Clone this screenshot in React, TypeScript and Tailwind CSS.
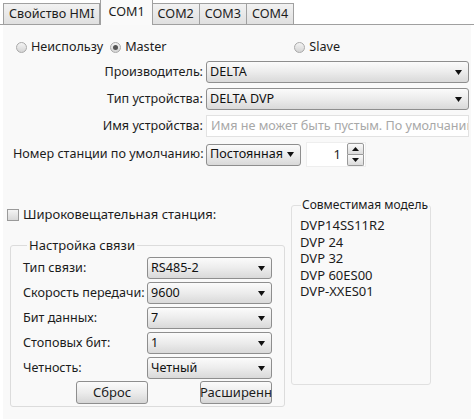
import React from "react";

const tabs = ["Свойство HMI", "COM1", "COM2", "COM3", "COM4"];
const models = ["DVP14SS11R2", "DVP 24", "DVP 32", "DVP 60ES00", "DVP-XXES01"];

function Arrow() {
  return (
    <svg width="7" height="5" viewBox="0 0 7 5" className="shrink-0">
      <path d="M0 0 H7 L3.5 5 Z" fill="#111" />
    </svg>
  );
}

function Select({ value, className = "" }: { value: string; className?: string }) {
  return (
    <div
      className={`flex items-center justify-between h-[22px] pl-[3px] pr-[6px] rounded-[3px] border border-[#8e8e8e] bg-gradient-to-b from-[#fbfbfb] via-[#ececec] to-[#d9d9d9] text-[#111] ${className}`}
    >
      <span className="truncate">{value}</span>
      <Arrow />
    </div>
  );
}

function Radio({ checked, label }: { checked?: boolean; label: string }) {
  return (
    <label className="flex items-center gap-[4px]">
      <span className="w-[11px] h-[11px] rounded-full border border-[#a9a9a9] bg-gradient-to-b from-[#f4f4f4] to-[#d4d4d4] flex items-center justify-center">
        {checked && <span className="w-[5px] h-[5px] rounded-full bg-[#555]" />}
      </span>
      <span>{label}</span>
    </label>
  );
}

function Btn({ label }: { label: string }) {
  return (
    <div className="w-[72px] h-[23px] flex items-center justify-center rounded-[3px] border border-[#8e8e8e] bg-gradient-to-b from-[#fbfbfb] via-[#ececec] to-[#d6d6d6] text-[13px]">
      {label}
    </div>
  );
}

export default function App() {
  return (
    <div
      className="w-[474px] h-[419px] bg-white text-[12.6px] text-[#1c1c1c] overflow-hidden"
      style={{ fontFamily: '"Noto Sans", "Liberation Sans", sans-serif' }}
    >
      {/* вкладки */}
      <div className="flex items-end h-[25px] pl-[3px] border-b border-[#a0a0a0]">
        {tabs.map((t) => {
          const active = t === "COM1";
          return (
            <div
              key={t}
              className={
                active
                  ? "relative -mb-px h-[26px] px-[7px] flex items-center border border-b-0 border-[#a0a0a0] bg-[#fafafa] text-[12.6px]"
                  : "h-[21px] px-[5px] flex items-center border border-l-0 first:border-l border-b-0 border-[#a0a0a0] bg-gradient-to-b from-[#f2f2f2] to-[#e0e0e0] text-[12.6px]"
              }
            >
              {t}
            </div>
          );
        })}
      </div>

      <div className="mx-[3px] h-[394px] bg-[#f9f9f9] pt-[14px]">
        {/* режим */}
        <div className="flex items-center h-[16px] pl-[13px]">
          <Radio label="Неиспользу" />
          <div className="ml-[7px]">
            <Radio checked label="Master" />
          </div>
          <div className="ml-auto mr-[131px]">
            <Radio label="Slave" />
          </div>
        </div>

        {/* параметры устройства */}
        <div className="grid grid-cols-[190px_263px] gap-x-[3px] gap-y-[5px] mt-[6px] pl-[10px] items-center">
          <span className="text-right">Производитель:</span>
          <Select value="DELTA" />
          <span className="text-right">Тип устройства:</span>
          <Select value="DELTA DVP" />
          <span className="text-right">Имя устройства:</span>
          <div className="h-[22px] flex items-center px-[4px] border border-[#e2e2e2] bg-white text-[#a8a8a8] whitespace-nowrap overflow-hidden">
            Имя не может быть пустым. По умолчанию
          </div>
          <span className="text-right whitespace-nowrap">Номер станции по умолчанию:</span>
          <div className="flex items-center gap-[5px]">
            <Select value="Постоянная" className="w-[95px]" />
            <div className="flex items-center h-[25px] w-[60px] bg-white border border-[#eeeeee]">
              <span className="flex-1 text-right pr-[6px] text-[13px]">1</span>
              <div className="flex flex-col w-[17px] h-[23px] mr-[1px]">
                <div className="flex-1 flex items-center justify-center border border-[#9a9a9a] rounded-t-[2px] bg-gradient-to-b from-[#fafafa] to-[#dcdcdc]">
                  <svg width="7" height="4" viewBox="0 0 7 4">
                    <path d="M0 4 H7 L3.5 0 Z" fill="#111" />
                  </svg>
                </div>
                <div className="flex-1 flex items-center justify-center border border-t-0 border-[#9a9a9a] rounded-b-[2px] bg-gradient-to-b from-[#fafafa] to-[#dcdcdc]">
                  <svg width="7" height="4" viewBox="0 0 7 4">
                    <path d="M0 0 H7 L3.5 4 Z" fill="#111" />
                  </svg>
                </div>
              </div>
            </div>
          </div>
        </div>

        {/* нижняя часть */}
        <div className="flex mt-[30px]">
          <div className="w-[280px] pl-[4px]">
            <label className="flex items-center gap-[4px] h-[16px] mt-[10px]">
              <span className="w-[12px] h-[12px] border border-[#9a9a9a] bg-gradient-to-b from-[#f4f4f4] to-[#d8d8d8]" />
              <span className="text-[13px]">Широковещательная станция:</span>
            </label>
            <fieldset className="mt-[14px] ml-[3px] w-[273px] h-[170px] border border-[#dcdcdc] rounded-[3px] px-[12px]">
              <legend className="ml-[4px] px-[2px] text-[13px] leading-[16px]">Настройка связи</legend>
              <div className="grid grid-cols-[124px_125px] gap-y-[3px] items-center mt-[4px]">
                <span>Тип связи:</span>
                <Select value="RS485-2" />
                <span>Скорость передачи:</span>
                <Select value="9600" />
                <span>Бит данных:</span>
                <Select value="7" />
                <span>Стоповых бит:</span>
                <Select value="1" />
                <span>Четность:</span>
                <Select value="Четный" />
              </div>
              <div className="flex justify-between pl-[53px] mt-[2px]">
                <Btn label="Сброс" />
                <Btn label="Расширенн" />
              </div>
            </fieldset>
          </div>
          <fieldset className="ml-[8px] w-[140px] h-[188px] border border-[#e0e0e0] rounded-[3px] pl-[8px]">
            <legend className="ml-[1px] px-[1px] text-[12px] leading-[16px] whitespace-nowrap">Совместимая модель</legend>
            <div className="mt-[4px] text-[13px] leading-[16.5px]">
              {models.map((m) => (
                <div key={m}>{m}</div>
              ))}
            </div>
          </fieldset>
        </div>
      </div>
    </div>
  );
}
